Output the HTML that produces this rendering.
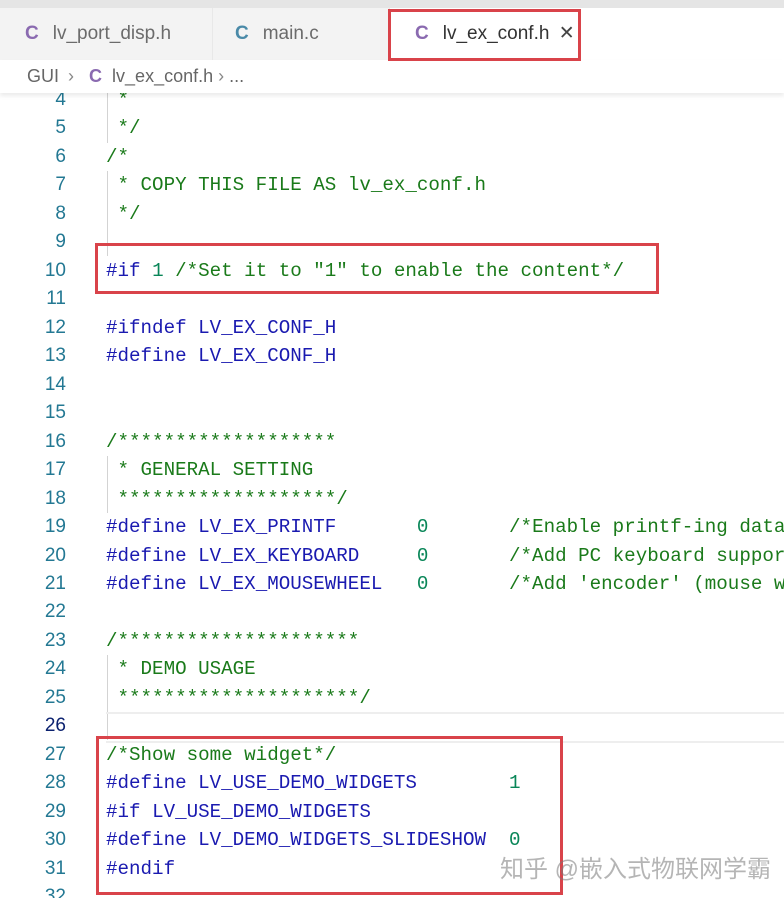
<!DOCTYPE html>
<html><head><meta charset="utf-8"><style>
body{margin:0;width:784px;height:898px;overflow:hidden;background:#fff;position:relative;font-family:"Liberation Sans","Noto Sans CJK SC",sans-serif}
.top{position:absolute;left:0;top:0;width:784px;height:8px;background:#e5e5e5}
.tabs{position:absolute;left:0;top:8px;width:784px;height:52px;background:#f3f3f3}
.tab{position:absolute;top:0;height:52px;line-height:52px;font-size:19px;color:#6b6b6b;border-right:1px solid #e8e8e8}
.tab b{font-weight:bold;margin-right:14px;font-size:19px}
.crumb{position:absolute;left:0;top:60px;width:784px;height:33px;background:#fff;box-shadow:0 3px 4px rgba(0,0,0,0.08);z-index:2;font-size:18px;color:#666;line-height:33px}
.code{position:absolute;left:0;top:86px;width:784px;height:812px;overflow:hidden;font-family:"Liberation Mono",monospace;font-size:19.2px}
.ln{height:28.48px;line-height:28.48px;position:relative;white-space:pre}
.n{position:absolute;right:718px;color:#237893;font-size:19px;font-family:"Liberation Sans",sans-serif}
.t{position:absolute;left:106px}
.k{color:#1a1ab0}.c{color:#1a7a1a}.m{color:#098658}.d{color:#000}
.guide{position:absolute;left:107px;width:1px;background:#d3d3d3}
.box{position:absolute;border:3px solid #d9434a;box-sizing:border-box;z-index:3}
.wm{position:absolute;left:500px;top:849px;font-size:24px;color:rgba(120,120,120,0.55);z-index:4;white-space:nowrap}
</style></head><body>
<div class="top"></div>
<div class="tabs">
<div class="tab" style="left:0;width:212px;"><span style="margin-left:25px"></span><b style="color:#8a6ab0">C</b>lv_port_disp.h</div>
<div class="tab" style="left:213px;width:176px;"><span style="margin-left:22px"></span><b style="color:#4a8aa8">C</b>main.c</div>
<div class="tab" style="left:390px;width:394px;background:#fff;color:#333;border:none"><span style="margin-left:25px"></span><b style="color:#8a6ab0">C</b>lv_ex_conf.h <span style="margin-left:4px;color:#444">✕</span></div>
</div>
<div class="box" style="left:388px;top:9px;width:193px;height:52px"></div>
<div class="crumb"><span style="margin-left:27px">GUI</span> <span style="color:#888;margin:0 6px 0 4px">›</span> <b style="color:#8a6ab0;margin:0 10px 0 4px">C</b>lv_ex_conf.h <span style="color:#888">›</span> ...</div>
<div class="code">
<div class="guide" style="top:0;height:57px"></div>
<div class="guide" style="top:85px;height:85px"></div>
<div class="guide" style="top:370px;height:57px"></div>
<div class="guide" style="top:569px;height:85px"></div>
<div style="position:absolute;left:106px;top:626px;width:678px;height:27px;border-top:2px solid #eee;border-bottom:2px solid #eee"></div>
<div class="ln"><span class="n">4</span><span class="t c"> *</span></div>
<div class="ln"><span class="n">5</span><span class="t c"> */</span></div>
<div class="ln"><span class="n">6</span><span class="t c">/*</span></div>
<div class="ln"><span class="n">7</span><span class="t c"> * COPY THIS FILE AS lv_ex_conf.h</span></div>
<div class="ln"><span class="n">8</span><span class="t c"> */</span></div>
<div class="ln"><span class="n">9</span></div>
<div class="ln"><span class="n">10</span><span class="t"><span class="k">#if</span> <span class="m">1</span> <span class="c">/*Set it to "1" to enable the content*/</span></span></div>
<div class="ln"><span class="n">11</span></div>
<div class="ln"><span class="n">12</span><span class="t"><span class="k">#ifndef</span> <span class="k">LV_EX_CONF_H</span></span></div>
<div class="ln"><span class="n">13</span><span class="t"><span class="k">#define</span> <span class="k">LV_EX_CONF_H</span></span></div>
<div class="ln"><span class="n">14</span></div>
<div class="ln"><span class="n">15</span></div>
<div class="ln"><span class="n">16</span><span class="t c">/*******************</span></div>
<div class="ln"><span class="n">17</span><span class="t c"> * GENERAL SETTING</span></div>
<div class="ln"><span class="n">18</span><span class="t c"> *******************/</span></div>
<div class="ln"><span class="n">19</span><span class="t"><span class="k">#define</span> <span class="k">LV_EX_PRINTF</span>       <span class="m">0</span>       <span class="c">/*Enable printf-ing data</span></span></div>
<div class="ln"><span class="n">20</span><span class="t"><span class="k">#define</span> <span class="k">LV_EX_KEYBOARD</span>     <span class="m">0</span>       <span class="c">/*Add PC keyboard support</span></span></div>
<div class="ln"><span class="n">21</span><span class="t"><span class="k">#define</span> <span class="k">LV_EX_MOUSEWHEEL</span>   <span class="m">0</span>       <span class="c">/*Add 'encoder' (mouse w</span></span></div>
<div class="ln"><span class="n">22</span></div>
<div class="ln"><span class="n">23</span><span class="t c">/*********************</span></div>
<div class="ln"><span class="n">24</span><span class="t c"> * DEMO USAGE</span></div>
<div class="ln"><span class="n">25</span><span class="t c"> *********************/</span></div>
<div class="ln"><span class="n" style="color:#0b216f">26</span></div>
<div class="ln"><span class="n">27</span><span class="t c">/*Show some widget*/</span></div>
<div class="ln"><span class="n">28</span><span class="t"><span class="k">#define</span> <span class="k">LV_USE_DEMO_WIDGETS</span>        <span class="m">1</span></span></div>
<div class="ln"><span class="n">29</span><span class="t"><span class="k">#if</span> <span class="k">LV_USE_DEMO_WIDGETS</span></span></div>
<div class="ln"><span class="n">30</span><span class="t"><span class="k">#define</span> <span class="k">LV_DEMO_WIDGETS_SLIDESHOW</span>  <span class="m">0</span></span></div>
<div class="ln"><span class="n">31</span><span class="t k">#endif</span></div>
<div class="ln"><span class="n">32</span></div>
</div>
<div class="box" style="left:95px;top:243px;width:564px;height:51px"></div>
<div class="box" style="left:96px;top:736px;width:467px;height:159px"></div>
<div class="wm">知乎 @嵌入式物联网学霸</div>
</body></html>
